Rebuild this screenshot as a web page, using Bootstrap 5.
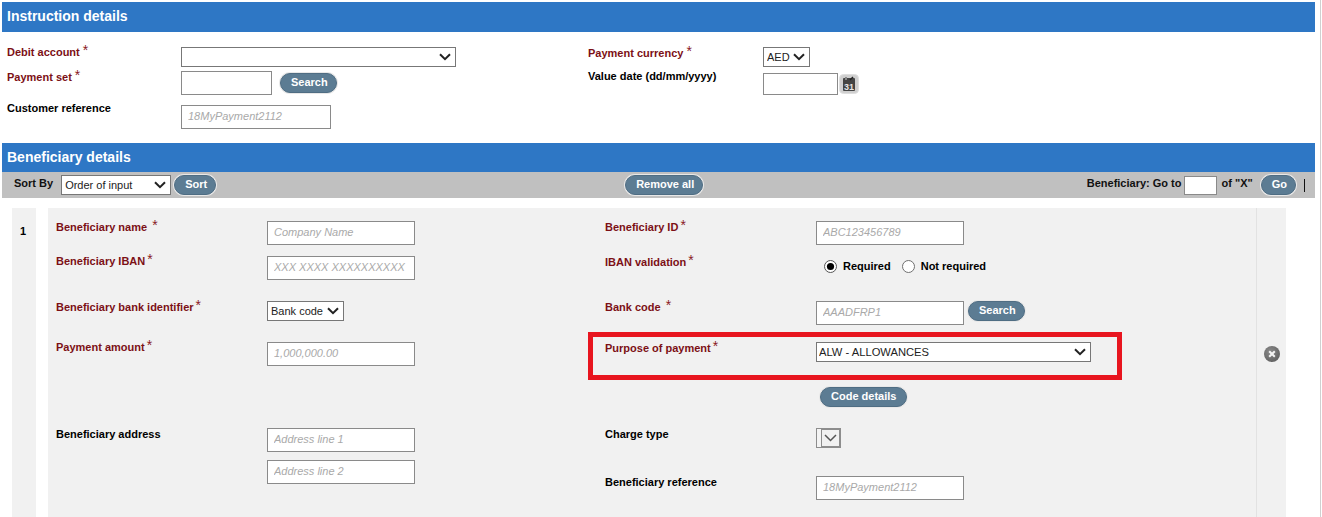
<!DOCTYPE html>
<html lang="en">
<head>
<meta charset="utf-8">
<title>Payment instruction</title>
<link href="https://cdn.jsdelivr.net/npm/bootstrap@5.3.0/dist/css/bootstrap.min.css" rel="stylesheet">
<style>
html,body{height:517px;overflow:hidden}
body{margin:0;background:#fff;font-family:"Liberation Sans",Arial,sans-serif;font-size:11px;color:#000;position:relative}
.page-edge{position:absolute;top:0;bottom:0;left:1320px;width:1px;background:#d0d0d0}
.sheet{width:1313px;margin-left:2px;padding-top:2px}
.head-bar{height:30px;background:#2e77c5;color:#fff;font-weight:700;font-size:14px;line-height:28px;padding-left:5px;margin:0}
.head-b{height:29px}
.lbl{font-weight:700;font-size:11px;line-height:13px;color:#000;margin:0;display:block}
.req{color:#7c1016}
.req i{font-style:normal;font-weight:400;font-size:14px;line-height:10px;color:#8a1a1f;vertical-align:1px;margin-left:2px}
.ins-grid .req i{margin-left:3px}
.inp{display:block;height:24px;border:1px solid #8a8a8a;border-radius:0;padding:0 6px 2px;font-size:11px;font-style:italic;font-family:inherit;background:#fff;min-height:0;box-shadow:none}
.inp::placeholder{color:#a9a9a9;opacity:1}
.w150{width:150px}.w148{width:148px}.w91{width:91px}.w75{width:75px;height:22px}
.w275{width:275px}.w47{width:47px}.w77{width:77px}
.sel{display:block;height:20px;min-height:0;border:1px solid #777;border-radius:0;font-size:11px;line-height:18px;font-family:inherit;color:#222;padding:0 14px 0 3px;
background-color:#fff;background-image:url("data:image/svg+xml,%3Csvg xmlns='http://www.w3.org/2000/svg' viewBox='0 0 12 8'%3E%3Cpath d='M1 1.2l5 5 5-5' fill='none' stroke='%23222' stroke-width='2'/%3E%3C/svg%3E");background-size:12px 8px;background-position:right 4px center;background-repeat:no-repeat}
.sel-purpose{font-size:11.2px;padding-left:2px;margin-top:-1px}
.pillbtn{display:inline-block;height:20px;padding:0 8px 2px 10px;border:1px solid #4f6d83;border-radius:10px;background:#5c7c93;color:#fff;font-weight:700;font-size:11px;line-height:15px;box-shadow:0 0 0 1px #e8e8e8}
.pillbtn:hover{background:#5c7c93;color:#fff}
.pill-wide{padding-left:10px;padding-right:10px}
.fcol{display:flex;flex-direction:column}
.frow{display:flex;align-items:flex-start}
.ins-grid{display:grid;grid-template-columns:581px 1fr;height:111px;padding-left:5px}
.lab-a{width:174px;flex:none}
.lab-a.up1{margin-top:-1px}
.lab-b{width:175px;flex:none}
.ins-r1{height:24px;margin-top:14px}
.ins-r2{height:32px}
.ins-r3{height:24px}
.nudge1{margin-top:1px}
.nudge3{margin-top:3px}
.nudge4{margin-top:4px}
.gap1{margin-left:1px}
.tool{height:26px;background:#c0c0c0;display:flex;align-items:center;padding-left:12px;font-weight:700;color:#111}
.tool-txt{margin-bottom:4px}
.tool-mid{margin-left:409px}
.tool-end{margin-left:auto;display:flex;align-items:center;padding-right:10px}
.sort-sel{width:110px;margin:0 3px 0 8px;height:20px;font-weight:400}
.go-inp{width:33px;height:19px;border:1px solid #8a8a8a;margin:0 5px 0 2px;background:#fff;padding:0}
.sep{width:1px;height:13px;background:#111;margin-left:8px}
.bene{display:flex;margin-top:10px;height:309px}
.num-col{width:24px;margin-left:10px;background:#f1f1f1;font-weight:700;padding:17px 0 0 8px;flex:none;line-height:13px}
.main-col{width:1238px;margin-left:12px;background:#f1f1f1;display:flex;position:relative;flex:none}
.form-l{width:549px;padding:13px 0 0 8px;flex:none}
.form-r{width:659px;padding:13px 0 0 8px;flex:none}
.lab-c{width:211px;flex:none;margin-top:-1px}
.lab-c.up2{margin-top:-2px}
.lab-c.flush{margin-top:0}
.close-col{width:30px;border-left:1px solid #e2e2e2;display:flex;justify-content:center;padding:138px 0 0 1px;flex:none}
.redbox{position:absolute;left:540px;top:124px;width:534px;height:48px;border:5px solid #e8151f;pointer-events:none}
.radio-line{display:flex;align-items:center;padding:0 0 0 8px;font-weight:700;height:22px;margin-top:-1px}
.radio-line .form-check-input{width:13px;height:13px;margin:0 6px 0 0;border:1px solid #707070;background-color:#fff;flex:none}
.radio-line .form-check-input:checked{background-color:#fff;border-color:#555;background-image:url("data:image/svg+xml,%3Csvg xmlns='http://www.w3.org/2000/svg' viewBox='0 0 13 13'%3E%3Ccircle cx='6.5' cy='6.5' r='3.6' fill='%23000'/%3E%3C/svg%3E");background-size:13px 13px}
.radio-line label{margin:1px 11px 0 0}
.cal-ico,.x-ico{display:block;flex:none}
.r32{height:32px}.r35{height:35px}.r41{height:41px}.r42{height:42px}.r44{height:44px}.r45{height:45px}.r48{height:48px}.r86{height:86px}
</style>
</head>
<body>
<div class="page-edge"></div>
<div class="sheet">
  <h2 class="head-bar">Instruction details</h2>
  <div class="ins-grid">
    <div class="fcol">
      <div class="frow ins-r1">
        <label class="lab-a up1 lbl req">Debit account<i>*</i></label>
        <select class="form-select sel w275 nudge1" aria-label="Debit account"><option></option></select>
      </div>
      <div class="frow ins-r2">
        <label class="lab-a lbl req">Payment set<i>*</i></label>
        <input class="form-control inp w91 nudge1" type="text" aria-label="Payment set">
        <button class="btn pillbtn ms-2 nudge3" type="button">Search</button>
      </div>
      <div class="frow ins-r3">
        <label class="lab-a lbl">Customer reference</label>
        <input class="form-control inp w150 nudge3" type="text" placeholder="18MyPayment2112" aria-label="Customer reference">
      </div>
    </div>
    <div class="fcol">
      <div class="frow ins-r1">
        <label class="lab-b lbl req">Payment currency<i>*</i></label>
        <select class="form-select sel w47 nudge1" aria-label="Payment currency"><option>AED</option></select>
      </div>
      <div class="frow ins-r2">
        <label class="lab-b lbl">Value date (dd/mm/yyyy)</label>
        <input class="form-control inp w75 nudge3" type="text" aria-label="Value date">
        <svg class="cal-ico gap1 nudge4" width="20" height="20" viewBox="0 0 20 20"><rect x=".5" y=".5" width="19" height="19" rx="4" fill="#cfcfcf" stroke="#dedede"/><rect x="4" y="4" width="12" height="13" rx="1" fill="#444"/><path d="M11 6l3-3" stroke="#222" stroke-width="1.5"/><rect x="6" y="3" width="2" height="3" fill="#888"/><text x="10" y="15.5" font-family="Liberation Sans" font-size="9" font-weight="700" fill="#e4e4e4" text-anchor="middle">31</text></svg>
      </div>
    </div>
  </div>
  <h2 class="head-bar head-b">Beneficiary details</h2>
  <div class="tool">
    <span class="tool-txt">Sort By</span>
    <select class="form-select sel sort-sel" aria-label="Sort by"><option>Order of input</option></select>
    <button class="btn pillbtn" type="button">Sort</button>
    <button class="btn pillbtn tool-mid" type="button">Remove all</button>
    <div class="tool-end">
      <span class="tool-txt">Beneficiary: Go to</span>
      <input class="go-inp" type="text" aria-label="Go to">
      <span class="tool-txt">of "X"</span>
      <button class="btn pillbtn ms-2" type="button">Go</button>
      <span class="sep"></span>
    </div>
  </div>
  <div class="bene">
    <div class="num-col">1</div>
    <div class="main-col">
      <div class="form-l fcol">
        <div class="frow r35"><label class="lab-c lbl req">Beneficiary name <i>*</i></label><input class="form-control inp w148" placeholder="Company Name" aria-label="Beneficiary name"></div>
        <div class="frow r45"><label class="lab-c up2 lbl req">Beneficiary IBAN<i>*</i></label><input class="form-control inp w148" placeholder="XXX XXXX XXXXXXXXXX" aria-label="Beneficiary IBAN"></div>
        <div class="frow r41"><label class="lab-c lbl req">Beneficiary bank identifier<i>*</i></label><select class="form-select sel w77" aria-label="Bank identifier"><option>Bank code</option></select></div>
        <div class="frow r86"><label class="lab-c up2 lbl req">Payment amount<i>*</i></label><input class="form-control inp w148" placeholder="1,000,000.00" aria-label="Payment amount"></div>
        <div class="frow r32"><label class="lab-c flush lbl">Beneficiary address</label><input class="form-control inp w148" placeholder="Address line 1" aria-label="Address line 1"></div>
        <div class="frow"><span class="lab-c"></span><input class="form-control inp w148" placeholder="Address line 2" aria-label="Address line 2"></div>
      </div>
      <div class="form-r fcol">
        <div class="frow r35"><label class="lab-c lbl req">Beneficiary ID<i>*</i></label><input class="form-control inp w148" placeholder="ABC123456789" aria-label="Beneficiary ID"></div>
        <div class="frow r45"><label class="lab-c lbl req">IBAN validation<i>*</i></label>
          <div class="radio-line">
            <input class="form-check-input" type="radio" name="iban" id="r1" checked><label for="r1">Required</label>
            <input class="form-check-input" type="radio" name="iban" id="r2"><label for="r2">Not required</label>
          </div>
        </div>
        <div class="frow r42"><label class="lab-c lbl req">Bank code <i>*</i></label><input class="form-control inp w148" placeholder="AAADFRP1" aria-label="Bank code"><button class="btn pillbtn ms-1" type="button">Search</button></div>
        <div class="frow r44"><label class="lab-c up2 lbl req">Purpose of payment<i>*</i></label><select class="form-select sel sel-purpose w275" aria-label="Purpose of payment"><option>ALW - ALLOWANCES</option></select></div>
        <div class="frow r41"><span class="lab-c"></span><button class="btn pillbtn pill-wide ms-1" type="button">Code details</button></div>
        <div class="frow r48"><label class="lab-c flush lbl">Charge type</label>
          <svg width="25" height="20" viewBox="0 0 25 20" role="img" aria-label="Charge type"><rect x=".5" y=".5" width="24" height="19" fill="#f4f4f4" stroke="#8d8d8d"/><rect x="5.5" y="1.5" width="18" height="17" fill="#f1f1f1" stroke="#8d8d8d"/><path d="M9 7l5.5 5.5L20 7" fill="none" stroke="#555" stroke-width="1.5"/></svg>
        </div>
        <div class="frow"><label class="lab-c flush lbl">Beneficiary reference</label><input class="form-control inp w148" placeholder="18MyPayment2112" aria-label="Beneficiary reference"></div>
      </div>
      <div class="close-col">
        <svg class="x-ico" width="16" height="16" viewBox="0 0 16 16"><defs><radialGradient id="xg" cx=".4" cy=".35" r=".75"><stop offset="0" stop-color="#8a8a8a"/><stop offset="1" stop-color="#5e5e5e"/></radialGradient></defs><circle cx="8" cy="8" r="8" fill="url(#xg)"/><path d="M5.2 5.2l5.6 5.6M10.8 5.2l-5.6 5.6" stroke="#f4f4f4" stroke-width="2"/></svg>
      </div>
      <div class="redbox"></div>
    </div>
  </div>
</div>
<script src="https://cdn.jsdelivr.net/npm/bootstrap@5.3.0/dist/js/bootstrap.bundle.min.js"></script>
</body>
</html>
